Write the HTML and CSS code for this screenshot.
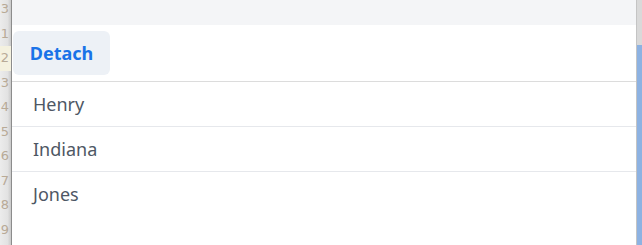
FILE: index.html
```html
<!DOCTYPE html>
<html lang="en">
<head>
    <meta charset="UTF-8">
    <meta name="viewport" content="width=device-width, initial-scale=1.0">
    <title>Detach</title>
    <link rel="stylesheet" href="styles.css">
</head>
<body>
    <div class="gutter">
        <div class="linea">3</div>
        <div class="linea">11</div>
        <div class="linea activa">12</div>
        <div class="linea">13</div>
        <div class="linea">14</div>
        <div class="linea">15</div>
        <div class="linea">16</div>
        <div class="linea">17</div>
        <div class="linea">18</div>
        <div class="linea">19</div>
    </div>
    <div class="panel">
        <div class="cabecera"></div>
        <div class="acciones">
            <button class="detach">Detach</button>
        </div>
        <ul class="lista">
            <li class="item">Henry</li>
            <li class="item">Indiana</li>
            <li class="item">Jones</li>
        </ul>
    </div>
    <div class="scroll">
        <div class="scroll-track"></div>
        <div class="scroll-thumb"></div>
    </div>
</body>
</html>
```

FILE: styles.css
```css
*{
    margin: 0;
    padding: 0;
    box-sizing: border-box;
}
body{
    display: flex;
    height: 100vh;
    overflow: hidden;
    background: #fff;
    font-family: "Noto Sans", "Open Sans", sans-serif;
}
/* numeros de linea del editor, cortados por la izquierda */
.gutter{
    width: 12px;
    flex-shrink: 0;
    overflow: hidden;
    margin-top: -3px;
    background: linear-gradient(90deg, #ececec, #e2e2e2 70%, #c9c9c9);
    border-right: 1px solid #8c8c8c;
}
.linea{
    height: 24.5px;
    line-height: 24.5px;
    font-family: "DejaVu Sans", sans-serif;
    font-size: 13px;
    color: #b8aa97;
    text-align: right;
    white-space: nowrap;
    direction: rtl;
    padding-right: 2px;
}
.activa{
    background: #f4f1df;
}
.panel{
    flex: 1;
    display: flex;
    flex-direction: column;
    border-right: 1px solid #c4c4c4;
}
.cabecera{
    height: 25px;
    background: #f4f5f7;
}
.acciones{
    padding: 6px 0 6px 1px;
    border-bottom: 1px solid #dcdcdc;
}
.detach{
    width: 97px;
    height: 44px;
    border: none;
    border-radius: 6px;
    background: #edf1f6;
    color: #1a73e8;
    font-family: "Noto Sans", "Open Sans", sans-serif;
    font-size: 18px;
    font-weight: 700;
    cursor: pointer;
}
.lista{
    list-style: none;
}
.item{
    height: 45px;
    line-height: 44px;
    padding-left: 21px;
    font-size: 18px;
    color: #4e5764;
    border-bottom: 1px solid #e6e8ec;
}
.item:last-child{
    border-bottom: none;
}
.scroll{
    width: 5px;
    flex-shrink: 0;
    display: flex;
    flex-direction: column;
}
.scroll-track{
    height: 45px;
    background: #d9d9d9;
}
.scroll-thumb{
    flex: 1;
    background: #8db2e2;
}
```
